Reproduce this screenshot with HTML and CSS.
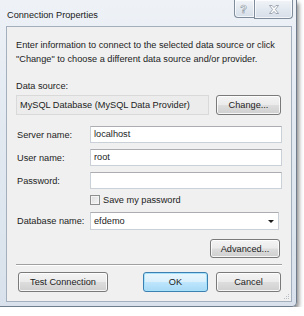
FILE: index.html
```html
<!DOCTYPE html>
<html lang="en">
<head>
    <meta charset="UTF-8">
    <title>Connection Properties</title>
    <link rel="stylesheet" href="styles.css">
</head>
<body>
<div class="window">
    <div class="titlebar">
        <span class="title">Connection Properties</span>
        <div class="caption-buttons">
            <div class="cap-btn help">?</div>
            <div class="cap-btn close">
                <svg width="10" height="9" viewBox="0 0 10 9">
                    <path d="M0.5 0.5h2.6L5 2.6 6.9 0.5h2.6L6.4 4.5l3.1 4H6.9L5 6.4 3.1 8.5H0.5l3.1-4z" fill="#fdfdfd" stroke="#8c97a4" stroke-width="0.8"/>
                </svg>
            </div>
        </div>
    </div>

    <div class="client">
        <p class="intro">Enter information to connect to the selected data source or click<br>"Change" to choose a different data source and/or provider.</p>

        <div class="label-top">Data source:</div>
        <div class="source-row">
            <div class="readonly">MySQL Database (MySQL Data Provider)</div>
            <div class="btn change">Change...</div>
        </div>

        <div class="field-row server">
            <label>Server name:</label>
            <div class="textbox">localhost</div>
        </div>
        <div class="field-row">
            <label>User name:</label>
            <div class="textbox">root</div>
        </div>
        <div class="field-row">
            <label>Password:</label>
            <div class="textbox"></div>
        </div>
        <div class="check-row">
            <span class="checkbox"></span>
            <span>Save my password</span>
        </div>
        <div class="field-row combo-row">
            <label>Database name:</label>
            <div class="combo">
                <span>efdemo</span>
                <span class="arrow"></span>
            </div>
        </div>

        <div class="advanced-row">
            <div class="btn advanced">Advanced...</div>
        </div>

        <div class="separator"></div>

        <div class="button-row">
            <div class="btn test">Test Connection</div>
            <div class="right-buttons">
                <div class="btn ok">OK</div>
                <div class="btn">Cancel</div>
            </div>
        </div>

        <!-- resize grip -->
        <svg class="grip" width="7" height="7" viewBox="0 0 7 7">
            <rect x="5" y="1" width="1" height="1" fill="#b9bec4"/>
            <rect x="3" y="3" width="1" height="1" fill="#b9bec4"/>
            <rect x="5" y="3" width="1" height="1" fill="#b9bec4"/>
            <rect x="1" y="5" width="1" height="1" fill="#b9bec4"/>
            <rect x="3" y="5" width="1" height="1" fill="#b9bec4"/>
            <rect x="5" y="5" width="1" height="1" fill="#b9bec4"/>
        </svg>
    </div>
</div>
</body>
</html>
```

FILE: styles.css
```css
body {
    margin: 0;
    background: #ffffff;
    font-family: "Liberation Sans", Arial, sans-serif;
    font-size: 9.2px;
    color: #1c1c1c;
}
.window {
    width: 297px;
    box-sizing: border-box;
    background: linear-gradient(to bottom, #eef2f7 0%, #e2e9f1 40%, #d9e2ec 100%);
    border-right: 1px solid #6f7c8b;
    border-bottom: 1px solid #6f7c8b;
    border-bottom-right-radius: 5px;
    box-shadow: 2px 3px 4px rgba(0,0,0,0.45);
}
.titlebar {
    height: 26px;
    display: flex;
    justify-content: space-between;
    align-items: flex-start;
}
.title {
    margin-top: 9px;
    margin-left: 7px;
    line-height: 12px;
    color: #1a1a1a;
}
.caption-buttons {
    display: flex;
    margin-right: 3px;
}
.cap-btn {
    height: 18px;
    display: flex;
    align-items: center;
    justify-content: center;
    background: linear-gradient(to bottom, #f1f4f8 0%, #e3e9f0 50%, #d6dee8 100%);
    border: 1px solid #7f8c9b;
    border-top: none;
    box-shadow: inset 0 0 0 1px rgba(255,255,255,0.7);
}
.help {
    width: 20px;
    border-bottom-left-radius: 4px;
    border-right: none;
    font-size: 11px;
    font-weight: bold;
    color: #fdfdfd;
    -webkit-text-stroke: 0.6px #8c97a4;
    padding-right: 2px;
    box-sizing: border-box;
}
.close {
    width: 37px;
    border-bottom-right-radius: 4px;
}
.client {
    position: relative;
    margin: 0 4px 4px 6px;
    background: #f0f0f0;
    border: 1px solid #a3afbd;
    padding: 11px 9px 9px 9px;
}
.intro {
    margin: 0;
    line-height: 14px;
}
.label-top {
    margin-top: 14px;
    line-height: 12px;
}
.source-row {
    margin-top: 3px;
    display: flex;
    gap: 7px;
    height: 20px;
}
.readonly {
    width: 193px;
    box-sizing: border-box;
    background: #ececec;
    border: 1px solid #d9d9d9;
    padding-left: 3px;
    line-height: 18px;
}
.btn {
    box-sizing: border-box;
    height: 20px;
    display: flex;
    align-items: center;
    justify-content: center;
    border: 1px solid #7a7a7a;
    border-radius: 3px;
    background: linear-gradient(to bottom, #f4f4f4 0%, #ebebeb 48%, #dddddd 52%, #cfcfcf 100%);
    box-shadow: inset 0 0 0 1px rgba(255,255,255,0.8);
}
.change {
    width: 65px;
}
.field-row {
    margin-top: 6px;
    display: grid;
    grid-template-columns: 74px 1fr;
    align-items: center;
    height: 17px;
}
.field-row.server {
    margin-top: 11px;
}
.field-row label {
    padding-left: 1px;
}
.textbox {
    height: 17px;
    box-sizing: border-box;
    background: #ffffff;
    border: 1px solid #c9d0d8;
    border-top-color: #abadb3;
    padding-left: 3px;
    line-height: 15px;
}
.check-row {
    margin-top: 5px;
    height: 12px;
    display: flex;
    align-items: center;
    padding-left: 74px;
    gap: 3px;
}
.checkbox {
    width: 10px;
    height: 10px;
    box-sizing: border-box;
    border: 1px solid #8e8f8f;
    background: linear-gradient(135deg, #dcdcdc 0%, #f6f6f6 100%);
    box-shadow: inset 0 0 0 1px #f4f4f4;
}
.field-row.combo-row {
    height: 18px;
    margin-top: 6px;
}
.combo {
    height: 18px;
    margin-right: 3px;
    box-sizing: border-box;
    background: #ffffff;
    border: 1px solid #c9d0d8;
    border-top-color: #abadb3;
    padding-left: 3px;
    padding-right: 4px;
    display: flex;
    align-items: center;
    justify-content: space-between;
}
.arrow {
    width: 0;
    height: 0;
    border-left: 3px solid transparent;
    border-right: 3px solid transparent;
    border-top: 3px solid #1c1c1c;
}
.advanced-row {
    margin-top: 9px;
    display: flex;
    justify-content: flex-end;
    padding-right: 2px;
}
.advanced {
    width: 70px;
    height: 19px;
}
.separator {
    margin-top: 6px;
    height: 1px;
    background: #a0a0a0;
    border-bottom: 1px solid #ffffff;
}
.button-row {
    margin-top: 6px;
    display: flex;
    justify-content: space-between;
    padding-left: 2px;
    padding-right: 1px;
}
.test {
    width: 90px;
}
.right-buttons {
    display: flex;
    gap: 8px;
}
.right-buttons .btn {
    width: 65px;
}
.btn.ok {
    border-color: #3c7fb1;
    background: linear-gradient(to bottom, #eaf6fd 0%, #d9f0fc 48%, #bee6fd 52%, #a7d9f5 100%);
    box-shadow: inset 0 0 0 1px #a6e3fb;
}
.grip {
    position: absolute;
    right: 1px;
    bottom: 1px;
}
```
